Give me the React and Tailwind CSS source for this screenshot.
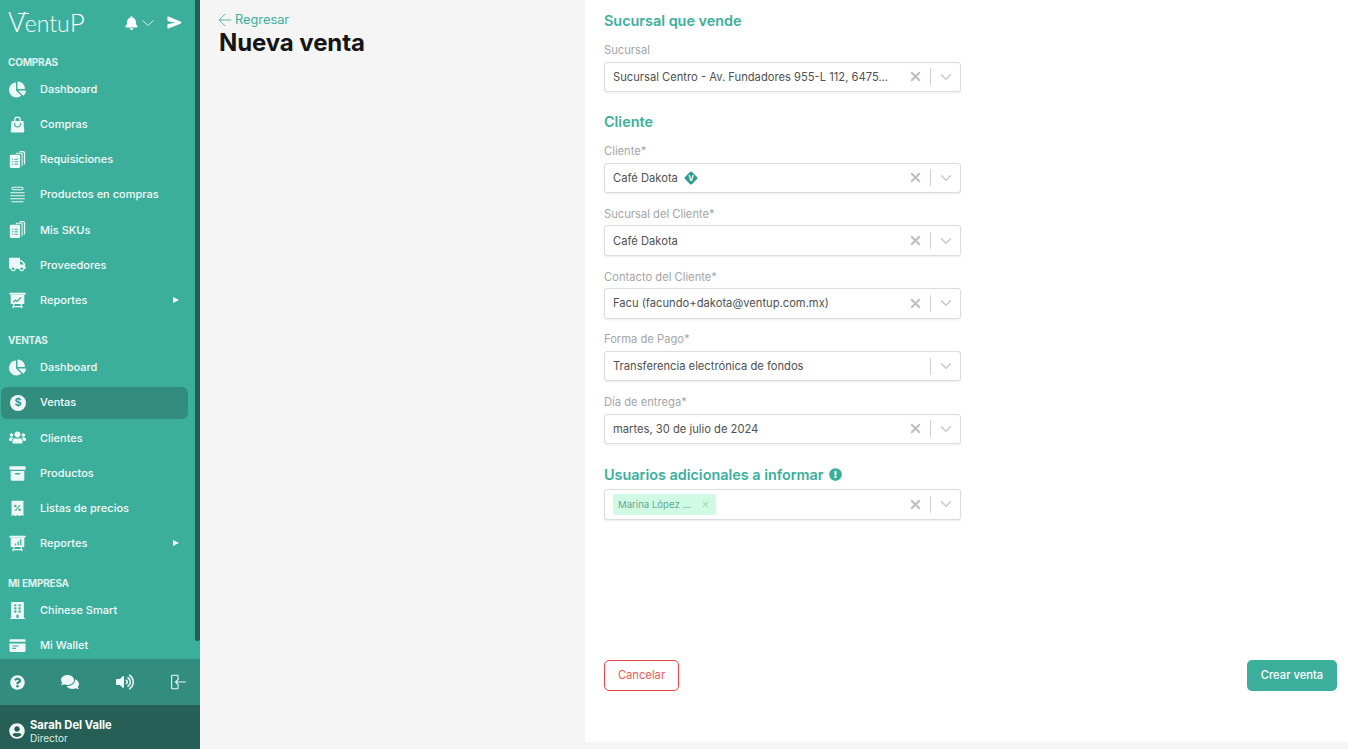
import React from "react";
import { ChevronDown, X, ArrowLeft } from "lucide-react";
import { FaChartPie, FaTruck, FaUsers, FaBuilding, FaQuestionCircle, FaComments, FaVolumeUp, FaUserCircle, FaBell, FaExclamationCircle } from "react-icons/fa";
import { IoSend } from "react-icons/io5";

const ic = "w-[17px] h-[17px] text-[#eef8f6]";

const Bag = () => (
  <svg viewBox="0 0 20 20" className={ic} fill="currentColor">
    <path fillRule="evenodd" d="M3 6h3V4.500a4 4 0 0 1 8 0V6h3l1 12a1.500 1.500 0 0 1-1.500 1.500h-13A1.500 1.500 0 0 1 2 18L3 6Zm4.500 0h5V4.500a2.500 2.500 0 0 0-5 0V6ZM6 8v1.500a4 4 0 0 0 8 0V8h-1.200v1.500a2.800 2.800 0 0 1-5.600 0V8H6Z" />
  </svg>
);
const Docs = () => (
  <svg viewBox="0 0 20 20" className={ic} fill="currentColor">
    <path d="M12.500 0h4.200A2.300 2.300 0 0 1 19 2.300v12.200a2 2 0 0 1-1.500 1.900V3c0-.9-.7-1.600-1.600-1.600h-3.400V0Z" />
    <path d="M8 2h6.200c1 0 1.800.8 1.800 1.800v13a1.600 1.600 0 0 1-1.200 1.500V5c0-1-.8-1.700-1.700-1.700H8V2Z" />
    <path fillRule="evenodd" d="M2.500 4.500h9A1.500 1.500 0 0 1 13 6v12.500a1.500 1.500 0 0 1-1.500 1.500h-9A1.500 1.500 0 0 1 1 18.500V6a1.500 1.500 0 0 1 1.500-1.500ZM3.500 9v1.300H5V9H3.500Zm3 0v1.300h4V9h-4Zm-3 3v1.300H5V12H3.500Zm3 0v1.300h4V12h-4Zm-3 3v1.300H5V15H3.500Zm3 0v1.300h4V15h-4Z" />
  </svg>
);
const Lines = () => (
  <svg viewBox="0 0 20 20" className={ic} fill="none" stroke="currentColor" strokeWidth="1.200">
    <rect x="3.500" y="1.500" width="13" height="3" rx="1.500" />
    <path d="M1.500 8h17M1.500 11.500h17M1.500 15h17M3 18.500h14" />
  </svg>
);
const Board = ({ bars }) => (
  <svg viewBox="0 0 20 20" className={ic} fill="currentColor">
    <rect x="0.500" y="1" width="19" height="2" rx="0.500" />
    {bars ? (
      <path fillRule="evenodd" d="M2 3h16v11H2V3Zm5 7v2h1.500v-2H7Zm3-2.500V12h1.500V7.500H10ZM13 5v7h1.500V5H13Z" />
    ) : (
      <path fillRule="evenodd" d="M2 3h16v11H2V3Zm2.500 8.500 3-3 2 1.500 4-4 1 1-5 5-2-1.500-2 2-1-1Z" />
    )}
    <path d="M5 14h1.500l-1 5H4l1-5Zm8.500 0H15l1 5h-1.500l-1-5ZM4 16.500h12V18H4v-1.500Z" />
  </svg>
);
const Archive = () => (
  <svg viewBox="0 0 20 20" className={ic} fill="currentColor">
    <rect x="0.500" y="1.500" width="19" height="4" rx="1" />
    <path fillRule="evenodd" d="M2 7h16v10a1.500 1.500 0 0 1-1.500 1.500h-13A1.500 1.500 0 0 1 2 17V7Zm5.500 2.500a.8.8 0 0 0 0 1.600h5a.8.8 0 0 0 0-1.600h-5Z" />
  </svg>
);
const Receipt = () => (
  <svg viewBox="0 0 20 20" className={ic} fill="currentColor">
    <path fillRule="evenodd" d="M3 1h14v18l-2.300-1.500L12.300 19 10 17.500 7.700 19l-2.400-1.500L3 19V1Zm9.600 4.500-5.800 6.800 1 .8 5.800-6.800-1-.8ZM7.500 5.500a1.500 1.500 0 1 0 0 3 1.500 1.500 0 0 0 0-3Zm5 4.500a1.500 1.500 0 1 0 0 3 1.500 1.500 0 0 0 0-3Z" />
  </svg>
);
const Card = () => (
  <svg viewBox="0 0 20 20" className={ic} fill="currentColor">
    <path d="M2 2.500h16A1.500 1.500 0 0 1 19.500 4v1.500H.5V4A1.500 1.500 0 0 1 2 2.500Z" />
    <path fillRule="evenodd" d="M.5 7.500h19V16a1.500 1.500 0 0 1-1.500 1.500H2A1.500 1.500 0 0 1 .5 16V7.500ZM4 10v1.300h7V10H4Zm0 2.700V14h4v-1.300H4Z" />
  </svg>
);
const Exit = () => (
  <svg viewBox="0 0 20 20" className="w-[16px] h-[18px] text-[#eef8f6]" fill="none" stroke="currentColor" strokeWidth="1.400" strokeLinecap="round" strokeLinejoin="round">
    <path d="M10 5.500V2.500a1 1 0 0 0-1-1H3a1 1 0 0 0-1 1v15a1 1 0 0 0 1 1h6a1 1 0 0 0 1-1v-3" />
    <path d="M19 10H7M10.500 6.500 7 10l3.500 3.500" />
  </svg>
);
const Dollar = () => (
  <span className="w-4 h-4 ml-px rounded-full bg-[#eef8f6] flex items-center justify-center text-[11px] font-semibold text-[#338d7e]">$</span>
);

function NavItem({ icon, label, active, arrow }) {
  return (
    <div className={`h-8 mb-[3.200px] ml-px w-[187px] rounded-md flex items-center pl-[8px] pr-[8px] ${active ? "bg-[#338d7e]" : ""}`}>
      <span className="w-[31px] flex-none flex items-center">{icon}</span>
      <span className="text-[11px] font-medium text-[#f4fbfa] flex-1 whitespace-nowrap">{label}</span>
      {arrow && <span className="w-0 h-0 border-y-[3.500px] border-y-transparent border-l-[6px] border-l-white mr-px" />}
    </div>
  );
}

function Section({ title, children, className }) {
  return (
    <div className={className || ""}>
      <div className="h-4 mb-[3px] pl-2 flex items-center text-[10px] font-bold text-[#dff3ef] tracking-[-0.2px]">{title}</div>
      {children}
    </div>
  );
}

function Sidebar() {
  return (
    <aside className="w-[200px] flex-none h-[749px] flex flex-col bg-[#3caf9c] overflow-hidden">
      <div className="h-[659px] flex overflow-hidden">
        <div className="w-[195px] flex-none">
          <div className="h-[54px] pl-2 pr-[13px] flex items-start pt-[6px] justify-between">
            <div className="text-white text-[23px] leading-[32px] font-light whitespace-nowrap flex items-baseline" style={{ fontFamily: "Lato, sans-serif" }}>
              <span className="text-[27px] relative">
                V
                <span className="absolute left-[10px] top-[7px] w-[11px] h-px bg-white" />
              </span>
              <span className="-ml-[1px]">entu</span>
              <span className="text-[26px]">P</span>
            </div>
            <div className="flex items-center pt-[9px]">
              <FaBell className="w-[13px] h-[14px] text-white" />
              <svg viewBox="0 0 12 6" className="w-[12px] h-[6px] ml-[4px] text-[#d8f0eb]" fill="none" stroke="currentColor" strokeWidth="1">
                <path d="M.5.500 6 5.500 11.500.500" />
              </svg>
              <IoSend className="w-[15px] h-[15px] text-white ml-[13px]" />
            </div>
          </div>
          <Section title="COMPRAS">
            <NavItem icon={<FaChartPie className={ic} />} label="Dashboard" />
            <NavItem icon={<Bag />} label="Compras" />
            <NavItem icon={<Docs />} label="Requisiciones" />
            <NavItem icon={<Lines />} label="Productos en compras" />
            <NavItem icon={<Docs />} label="Mis SKUs" />
            <NavItem icon={<FaTruck className={ic} />} label="Proveedores" />
            <NavItem icon={<Board />} label="Reportes" arrow />
          </Section>
          <Section title="VENTAS" className="mt-[16.400px]">
            <NavItem icon={<FaChartPie className={ic} />} label="Dashboard" />
            <NavItem active icon={<Dollar />} label="Ventas" />
            <NavItem icon={<FaUsers className={ic} />} label="Clientes" />
            <NavItem icon={<Archive />} label="Productos" />
            <NavItem icon={<Receipt />} label="Listas de precios" />
            <NavItem icon={<Board bars />} label="Reportes" arrow />
          </Section>
          <Section title="MI EMPRESA" className="mt-[16px]">
            <NavItem icon={<FaBuilding className={ic} />} label="Chinese Smart" />
            <NavItem icon={<Card />} label="Mi Wallet" />
          </Section>
        </div>
        <div className="w-[5px] h-[641px] bg-[#235c52] rounded-b-sm" />
      </div>
      <div className="h-[46px] flex-none bg-[#338d7e] flex items-center justify-between pl-[10px] pr-[14px]">
        <FaQuestionCircle className="w-[15px] h-[15px] text-[#eef8f6]" />
        <FaComments className="w-[18px] h-[18px] text-[#eef8f6]" />
        <FaVolumeUp className="w-[18px] h-[18px] text-[#eef8f6]" />
        <Exit />
      </div>
      <div className="h-[44px] flex-none bg-[#255f55] flex items-center pl-[9px] pt-[8px]">
        <FaUserCircle className="w-4 h-4 text-[#eef8f6]" />
        <div className="ml-[5px] flex flex-col">
          <span className="text-[11.200px] leading-[14px] font-bold text-white">Sarah Del Valle</span>
          <span className="text-[10px] leading-[13px] text-[#dcefeb]">Director</span>
        </div>
      </div>
    </aside>
  );
}

function Diamond() {
  return (
    <svg viewBox="0 0 14 14" className="w-[14px] h-[14px] ml-[6px] flex-none">
      <rect x="2" y="2" width="10" height="10" rx="1.500" transform="rotate(45 7 7)" fill="#2f9d8b" />
      <text x="7" y="9.700" textAnchor="middle" fontSize="7.500" fontWeight="700" fill="#fff" fontFamily="Inter, sans-serif">V</text>
    </svg>
  );
}

function Select({ children, noClear, tall }) {
  return (
    <div className={`${tall ? "h-[31px]" : "h-[30.400px]"} w-[357px] flex items-center bg-white border border-[#dcdcdc] rounded-[3px] shadow-[0_1px_2px_rgba(0,0,0,0.08)] pl-2 pr-[5px]`}>
      <div className="flex-1 min-w-0 flex items-center pt-px text-[11.200px] text-[#505050] whitespace-nowrap overflow-hidden">{children}</div>
      {!noClear && <X className="w-[15px] h-[15px] text-[#bdbdbd] flex-none" strokeWidth={3} />}
      <span className="w-px h-[17px] bg-[#cfcfcf] ml-[7px] mr-[6px] flex-none" />
      <ChevronDown className="w-[18px] h-[18px] text-[#c9c9c9] flex-none" strokeWidth={2} />
    </div>
  );
}

function Field({ label, children, noClear }) {
  return (
    <div className="mb-[12.800px]">
      <div className="h-4 mb-[3.600px] pt-px flex items-center text-[11.200px] text-[#a5a5a5]">{label}</div>
      <Select noClear={noClear}>{children}</Select>
    </div>
  );
}

function Heading({ children, className }) {
  return <div className={`h-5 flex items-center text-[14.400px] font-semibold text-[#3caf9c] ${className || ""}`}>{children}</div>;
}

export default function App() {
  return (
    <div className="w-[1348px] h-[749px] flex bg-[#f5f5f5] overflow-hidden" style={{ fontFamily: "Inter, sans-serif" }}>
      <Sidebar />
      <div className="w-[385px] flex-none pl-[19px] pt-[12px]">
        <div className="flex items-center h-4 text-[12.800px] font-normal text-[#3caf9c]">
          <ArrowLeft className="w-[20px] h-[20px] -ml-[4px]" strokeWidth={1} />
          Regresar
        </div>
        <h1 className="text-[24px] leading-[30px] font-bold text-[#151515] tracking-[-0.1px]">Nueva venta</h1>
      </div>
      <div className="w-[763px] flex-none h-[742px] bg-white pl-[19px] pr-[11px] flex flex-col">
        <Heading className="mt-[11px] mb-[11px]">Sucursal que vende</Heading>
        <Field label="Sucursal">Sucursal Centro - Av. Fundadores 955-L 112, 6475...</Field>
        <Heading className="mt-[7.200px] mb-[11px]">Cliente</Heading>
        <Field label="Cliente*">Café Dakota<Diamond /></Field>
        <Field label="Sucursal del Cliente*">Café Dakota</Field>
        <Field label="Contacto del Cliente*">Facu (facundo+dakota@ventup.com.mx)</Field>
        <Field label="Forma de Pago*" noClear>Transferencia electrónica de fondos</Field>
        <Field label="Día de entrega*">martes, 30 de julio de 2024</Field>
        <Heading className="mt-[8px] mb-[4px]">
          Usuarios adicionales a informar
          <FaExclamationCircle className="w-[13px] h-[13px] ml-[5px] text-[#3caf9c]" />
        </Heading>
        <Select tall>
          <span className="h-[21px] w-[103px] bg-[#d1fae5] rounded-[2px] flex items-center pl-[5px] text-[9.600px] text-[#5fa89a]">
            <span className="flex-1">Marina López ...</span>
            <X className="w-[9px] h-[9px] mr-[6px] text-[#5fa89a]" strokeWidth={1.500} />
          </span>
        </Select>
        <div className="mt-auto mb-[51px] flex justify-between">
          <button className="w-[75px] h-[31px] bg-white border border-[#ef4444] rounded-[5px] text-[11.200px] text-[#ef5a5a]">Cancelar</button>
          <button className="w-[90px] h-[31px] bg-[#3caf9c] rounded-[5px] text-[11.200px] font-medium text-white">Crear venta</button>
        </div>
      </div>
    </div>
  );
}
